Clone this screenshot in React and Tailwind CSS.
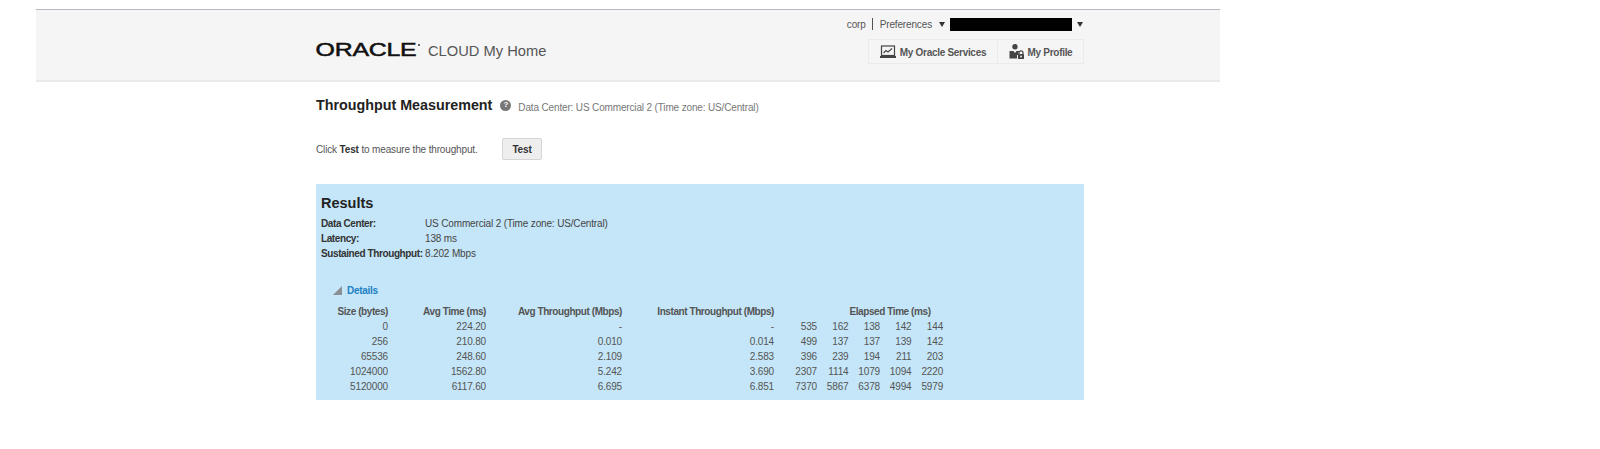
const ROWS = [
  { size: "0", time: "224.20", avg: "-", inst: "-", elapsed: ["535", "162", "138", "142", "144"] },
  { size: "256", time: "210.80", avg: "0.010", inst: "0.014", elapsed: ["499", "137", "137", "139", "142"] },
  { size: "65536", time: "248.60", avg: "2.109", inst: "2.583", elapsed: ["396", "239", "194", "211", "203"] },
  { size: "1024000", time: "1562.80", avg: "5.242", inst: "3.690", elapsed: ["2307", "1114", "1079", "1094", "2220"] },
  { size: "5120000", time: "6117.60", avg: "6.695", inst: "6.851", elapsed: ["7370", "5867", "6378", "4994", "5979"] },
];

function Caret() {
  return <span className="inline-block h-0 w-0 border-x-[3.5px] border-t-[5px] border-x-transparent border-t-[#333]" />;
}

function ServicesIcon() {
  return (
    <svg width="16" height="14" viewBox="0 0 16 14" fill="none" stroke="#444">
      <rect x="1.5" y="1" width="13" height="9.5" strokeWidth="1.2" />
      <path d="M3.5 8 L6 5.5 L8 7 L12 3.5" strokeWidth="1.1" />
      <path d="M0 12 H16" strokeWidth="2" />
    </svg>
  );
}

function ProfileIcon() {
  return (
    <svg width="16" height="16" viewBox="0 0 16 16" fill="#444">
      <circle cx="6" cy="2.8" r="2.7" />
      <path d="M0.5 7 H4.5 L6 9 L7.5 7 H11 V8 H9.5 V11 H8 V14.5 H0.5 Z" />
      <path d="M10 10 V8.8 A2 2 0 0 1 14 8.8 V10" fill="none" stroke="#444" strokeWidth="1.2" />
      <rect x="9" y="10" width="6" height="5" rx="0.5" />
      <circle cx="12" cy="12.5" r="0.9" fill="#f5f5f5" />
    </svg>
  );
}

export default function App() {
  return (
    <div className="h-[449px] w-[1600px] overflow-hidden bg-white pl-[36px] pt-[9px] font-['Liberation_Sans',Arial,sans-serif] text-[10px] tracking-[-0.15px] text-[#555]">
      <div className="w-[1184px]">
        <header className="h-[73px] border-t border-b-2 border-t-[#b4b9c4] border-b-[#eaeaea] bg-[#f5f5f5] pl-[280px]">
          <div className="flex w-[768px] justify-between">
            <div className="flex items-start">
              <svg width="104" height="18" viewBox="0 0 104 18" className="mt-[31px]">
                <text x="-0.5" y="15" textLength="101" lengthAdjust="spacingAndGlyphs" fontFamily="Liberation Sans" fontSize="18" stroke="#111" strokeWidth="0.5" fill="#111">ORACLE</text>
                <circle cx="103" cy="4" r="1" fill="#333" />
              </svg>
              <span className="mt-[31px] ml-[8px] text-[14.7px] leading-[20px] tracking-normal text-[#555]">CLOUD My Home</span>
            </div>
            <div className="flex flex-col items-end">
              <div className="mt-[6px] flex h-[16px] items-center">
                <span>corp</span>
                <span className="ml-[6px] mr-[7px] h-[12px] w-px bg-[#555]" />
                <span>Preferences</span>
                <span className="ml-[7px] flex"><Caret /></span>
                <span className="ml-[5px] h-[13px] w-[122px] bg-black" />
                <span className="ml-[5px] mr-[1px] flex"><Caret /></span>
              </div>
              <div className="mt-[7px] flex h-[25px] w-[216px] border border-[#ebebeb] pt-[1px] font-bold tracking-[-0.3px] text-[#555]">
                <div className="flex w-[129px] items-center justify-center gap-[4px] border-r border-[#ebebeb]">
                  <ServicesIcon />
                  My Oracle Services
                </div>
                <div className="flex flex-1 items-center justify-center gap-[3px]">
                  <ProfileIcon />
                  My Profile
                </div>
              </div>
            </div>
          </div>
        </header>

        <main className="ml-[280px] w-[768px]">
          <div className="mt-[15px] flex h-[18px] items-center">
            <h1 className="text-[14.3px] font-bold tracking-normal text-[#222]">Throughput Measurement</h1>
            <span className="mb-[2px] ml-[8px] flex h-[11px] w-[11px] items-center justify-center rounded-full bg-[#777] text-[8px] font-bold text-white">?</span>
            <span className="mt-[2px] ml-[7px] text-[#777]">Data Center: US Commercial 2 (Time zone: US/Central)</span>
          </div>

          <div className="mt-[23px] flex h-[22px] items-center">
            <span className="w-[186px]">Click <b className="text-[#333]">Test</b> to measure the throughput.</span>
            <button className="h-[22px] w-[40px] rounded-[2px] border border-[#d5d5d5] bg-[#eee] font-bold text-[#333]">Test</button>
          </div>

          <section className="mt-[24px] h-[216px] bg-[#c4e6f8] pl-[5px] pt-[11px]">
            <h2 className="text-[14.5px] leading-[16px] font-bold tracking-normal text-[#222]">Results</h2>
            <div className="mt-[5px] grid grid-cols-[104px_1fr] leading-[15px] text-[#444]">
              <b className="whitespace-nowrap tracking-[-0.4px] text-[#333]">Data Center:</b><span>US Commercial 2 (Time zone: US/Central)</span>
              <b className="whitespace-nowrap tracking-[-0.4px] text-[#333]">Latency:</b><span>138 ms</span>
              <b className="whitespace-nowrap tracking-[-0.4px] text-[#333]">Sustained Throughput:</b><span>8.202 Mbps</span>
            </div>

            <div className="mt-[22px] ml-[12px] flex h-[15px] items-center gap-[5px]">
              <span className="h-0 w-0 border-b-[9px] border-l-[9px] border-b-[#8a8f93] border-l-transparent" />
              <span className="font-bold tracking-[-0.3px] text-[#1d7fc4]">Details</span>
            </div>

            <table className="mt-[6px] ml-[1px] w-[621px] table-fixed border-collapse leading-[15px]">
              <colgroup>
                <col className="w-[66px]" />
                <col className="w-[98px]" />
                <col className="w-[136px]" />
                <col className="w-[152px]" />
                <col className="w-[43px]" />
                <col className="w-[31.5px]" />
                <col className="w-[31.5px]" />
                <col className="w-[31.5px]" />
                <col className="w-[31.5px]" />
              </colgroup>
              <thead>
                <tr className="h-[15px] tracking-[-0.42px] text-[#555]">
                  <th className="p-0 text-right font-bold">Size (bytes)</th>
                  <th className="p-0 text-right font-bold">Avg Time (ms)</th>
                  <th className="p-0 text-right font-bold">Avg Throughput (Mbps)</th>
                  <th className="p-0 text-right font-bold">Instant Throughput (Mbps)</th>
                  <th colSpan={5} className="p-0 pl-[63px] text-center font-bold">Elapsed Time (ms)</th>
                </tr>
              </thead>
              <tbody>
                {ROWS.map((r) => (
                  <tr key={r.size} className="h-[15px]">
                    <td className="p-0 text-right">{r.size}</td>
                    <td className="p-0 text-right">{r.time}</td>
                    <td className="p-0 text-right">{r.avg}</td>
                    <td className="p-0 text-right">{r.inst}</td>
                    {r.elapsed.map((e, i) => (
                      <td key={i} className="p-0 text-right">{e}</td>
                    ))}
                  </tr>
                ))}
              </tbody>
            </table>
          </section>
        </main>
      </div>
    </div>
  );
}
